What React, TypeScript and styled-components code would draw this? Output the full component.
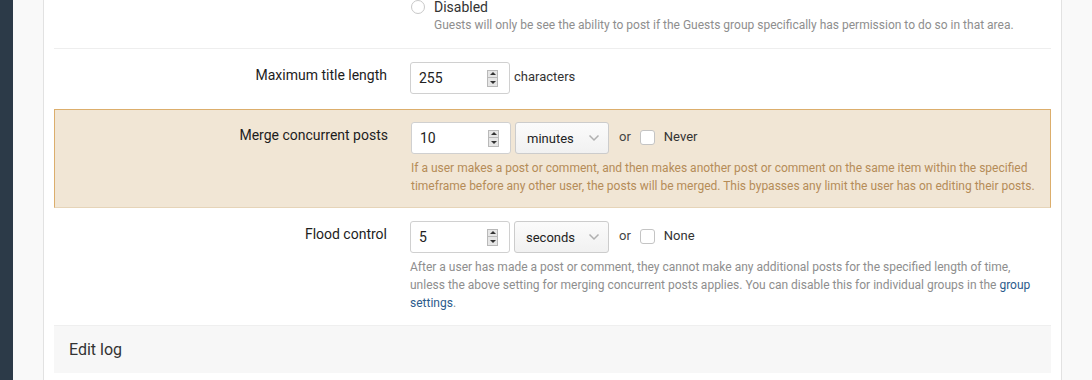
import React from "react";
import styled, { createGlobalStyle } from "styled-components";

const GlobalStyle = createGlobalStyle`
  html, body {
    margin: 0;
    padding: 0;
    background: #f9f9f9;
    font-family: Roboto, "Liberation Sans", Arial, sans-serif;
    overflow: hidden;
  }
`;

const Page = styled.div`
  display: flex;
  height: 380px;
`;

const Sidebar = styled.div`
  width: 13px;
  flex-shrink: 0;
  background: #2c3a48;
`;

const Gutter = styled.div`
  width: 30px;
  flex-shrink: 0;
  background: #f9f9f9;
`;

const Panel = styled.div`
  width: 997px;
  flex-shrink: 0;
  background: #ffffff;
  border-left: 1px solid #e2e2e2;
  border-right: 1px solid #e2e2e2;
  padding: 0 10px;
`;

const Row = styled.div<{ $highlight?: boolean; $divider?: boolean; $pad?: string }>`
  display: grid;
  grid-template-columns: 345px 1fr;
  padding: ${(p) => p.$pad ?? "13px 0 15px"};
  background: ${(p) => (p.$highlight ? "#f1e6d5" : "transparent")};
  border: ${(p) => (p.$highlight ? "1px solid #dcae6c" : "none")};
  border-bottom: ${(p) =>
    p.$highlight ? "1px solid #e6d4b8" : p.$divider ? "1px solid #eeeeee" : "none"};
`;

const Label = styled.div`
  text-align: right;
  padding-right: 12px;
  padding-top: 4px;
  font-size: 14px;
  line-height: 18px;
  color: #1d1d1d;
`;

const Field = styled.div`
  padding-left: 11px;
  padding-right: 10px;
`;

const Controls = styled.div`
  display: flex;
  align-items: center;
  height: 32px;
`;

const NumberBox = styled.div`
  width: 100px;
  height: 32px;
  box-sizing: border-box;
  border: 1px solid #d0d0d0;
  border-radius: 3px;
  background: #ffffff;
  display: flex;
  align-items: center;
  justify-content: space-between;
  padding: 0 11px 0 8px;
  font-size: 14px;
  color: #222;
`;

const Spinner = styled.div`
  width: 11px;
  height: 17px;
  box-sizing: border-box;
  border: 1px solid #b9b9b9;
  background: #e6e6e6;
  display: flex;
  flex-direction: column;
  align-items: center;
  justify-content: space-around;
`;

const Arrow = styled.div<{ $down?: boolean }>`
  width: 0;
  height: 0;
  border-left: 3px solid transparent;
  border-right: 3px solid transparent;
  ${(p) => (p.$down ? "border-top: 3px solid #333;" : "border-bottom: 3px solid #333;")}
`;

const SpinLine = styled.div`
  width: 100%;
  height: 1px;
  background: #b9b9b9;
`;

const Unit = styled.span`
  margin-left: 4px;
  font-size: 13px;
  color: #333;
  padding-bottom: 4px;
`;

const SelectBox = styled.div<{ $w: number }>`
  width: ${(p) => p.$w}px;
  height: 32px;
  box-sizing: border-box;
  margin-left: 4px;
  border: 1px solid #cccccc;
  border-radius: 3px;
  background: linear-gradient(#fbfbfb, #f1f1f1);
  display: flex;
  align-items: center;
  justify-content: space-between;
  padding: 0 8px 0 11px;
  font-size: 13px;
  color: #222;
`;

const Or = styled.span`
  margin-left: 10px;
  font-size: 13px;
  color: #444;
  padding-bottom: 4px;
`;

const Check = styled.span`
  margin-left: 9px;
  width: 15px;
  height: 15px;
  box-sizing: border-box;
  border: 1px solid #c4c4c4;
  border-radius: 3px;
  background: #ffffff;
  margin-bottom: 2px;
`;

const CheckText = styled.span`
  margin-left: 9px;
  font-size: 13px;
  color: #333;
  padding-bottom: 4px;
`;

const Desc = styled.div<{ $tone?: "warn" }>`
  margin-top: 5px;
  font-size: 12px;
  line-height: 18px;
  color: ${(p) => (p.$tone === "warn" ? "#b58c58" : "#8e8e8e")};
`;

const Link = styled.a`
  color: #2d5b8c;
  text-decoration: none;
`;

const RadioLine = styled.div`
  display: flex;
  align-items: center;
  height: 14px;
  font-size: 14px;
  color: #333;
`;

const Radio = styled.span`
  width: 14px;
  height: 14px;
  box-sizing: border-box;
  border: 1px solid #c8c8c8;
  border-radius: 50%;
  background: #fff;
  margin-left: 1px;
  margin-right: 9px;
`;

const RadioDesc = styled.div`
  margin-top: 2px;
  padding-left: 24px;
  font-size: 12px;
  line-height: 18px;
  color: #8e8e8e;
`;

const SectionHeader = styled.div`
  height: 48px;
  box-sizing: border-box;
  background: #f7f7f7;
  border-top: 1px solid #efefef;
  display: flex;
  align-items: center;
  padding-left: 15px;
  font-size: 16px;
  color: #333;
`;

const Chevron = () => (
  <svg width="12" height="8" viewBox="0 0 12 8">
    <path d="M1.5 1.5 L6 6 L10.5 1.5" fill="none" stroke="#b0b0b0" strokeWidth="1.5" />
  </svg>
);

const NumberInput: React.FC<{ value: string }> = ({ value }) => (
  <NumberBox>
    <span>{value}</span>
    <Spinner>
      <Arrow />
      <SpinLine />
      <Arrow $down />
    </Spinner>
  </NumberBox>
);

const App: React.FC = () => (
  <Page>
    <GlobalStyle />
    <Sidebar />
    <Gutter />
    <Panel>
      <Row $divider $pad="0 0 14px">
        <div />
        <Field>
          <RadioLine>
            <Radio />
            Disabled
          </RadioLine>
          <RadioDesc>
            Guests will only be see the ability to post if the Guests group specifically has
            permission to do so in that area.
          </RadioDesc>
        </Field>
      </Row>
      <Row>
        <Label>Maximum title length</Label>
        <Field>
          <Controls>
            <NumberInput value="255" />
            <Unit>characters</Unit>
          </Controls>
        </Field>
      </Row>
      <Row $highlight $pad="12px 0 12px">
        <Label>Merge concurrent posts</Label>
        <Field>
          <Controls>
            <NumberInput value="10" />
            <SelectBox $w={94}>
              minutes
              <Chevron />
            </SelectBox>
            <Or>or</Or>
            <Check />
            <CheckText>Never</CheckText>
          </Controls>
          <Desc $tone="warn">
            If a user makes a post or comment, and then makes another post or comment on the same
            item within the specified timeframe before any other user, the posts will be merged.
            This bypasses any limit the user has on editing their posts.
          </Desc>
        </Field>
      </Row>
      <Row $pad="13px 0 13px">
        <Label>Flood control</Label>
        <Field>
          <Controls>
            <NumberInput value="5" />
            <SelectBox $w={95}>
              seconds
              <Chevron />
            </SelectBox>
            <Or>or</Or>
            <Check />
            <CheckText>None</CheckText>
          </Controls>
          <Desc>
            After a user has made a post or comment, they cannot make any additional posts for the
            specified length of time, unless the above setting for merging concurrent posts
            applies. You can disable this for individual groups in the{" "}
            <Link href="#">group settings</Link>.
          </Desc>
        </Field>
      </Row>
      <SectionHeader>Edit log</SectionHeader>
    </Panel>
  </Page>
);

export default App;
